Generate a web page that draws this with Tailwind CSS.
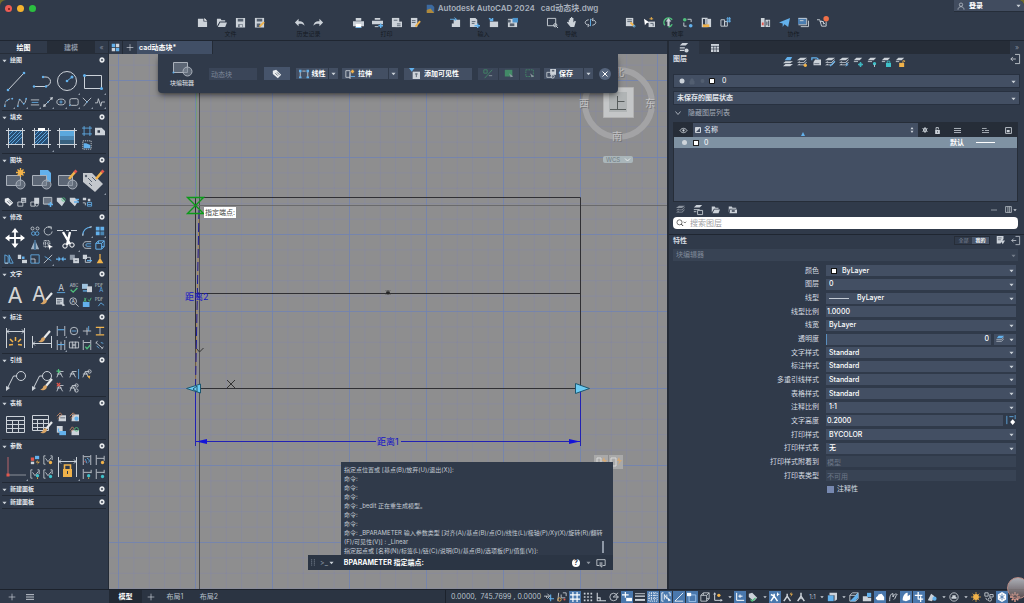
<!DOCTYPE html>
<html lang="zh-CN">
	<head>
		<meta charset="UTF-8" />
		<meta name="viewport" content="width=device-width, initial-scale=1.0" />
		<title>Autodesk AutoCAD 2024 cad动态块.dwg</title>
		<script src="https://cdn.jsdelivr.net/npm/@tailwindcss/browser@4"></script>
	</head>
	<body class="bg-[#6e6a2c]">
		<div class="h-screen flex flex-col overflow-hidden rounded-t-md bg-[#303a4a] text-[#d7dce2] text-[7px] leading-[10px] font-['Inter','Noto_Sans_CJK_SC',sans-serif]">
			<!-- title bar and toolbar -->
			<header class="relative h-[41px] shrink-0 border-b border-[#1f2631]">
				<div class="absolute left-[5px] top-[5px] flex gap-[5px]">
					<button aria-label="关闭" class="size-[7px] rounded-full bg-[#ee5c54] flex items-center justify-center"><span class="size-[2px] rounded-full bg-[#7a1511]"></span></button>
					<button aria-label="最小化" class="size-[7px] rounded-full bg-[#f5b32f]"></button>
					<button aria-label="缩放" class="size-[7px] rounded-full bg-[#2bbf40]"></button>
				</div>
				<button class="absolute right-0 top-0 w-[70px] h-3 bg-[#414c5f] border-b border-[#252d39] flex items-center gap-1 px-[3px] font-bold text-white">
					<span data-icon="user" class="size-2"></span>登录<span data-icon="caret" class="size-[5px] ml-auto"></span>
				</button>
				<div class="h-4 flex items-center justify-center gap-[3px] text-[8px] font-semibold text-[#a9b1bd]">
					<span data-icon="dwg" class="size-[9px]"></span>
					<h1>Autodesk AutoCAD 2024</h1>
					<span class="ml-[3px]">cad动态块.dwg</span>
				</div>
				<nav id="toolbar" class="flex justify-center gap-[21px]"></nav>
			</header>

			<main class="flex-1 min-h-0 flex">
				<!-- tool palette -->
				<aside class="w-[109px] shrink-0 border-r border-[#242b36]">
					<div class="h-[13px] flex bg-[#262d38] text-center leading-[13px] border-b border-[#262d38]">
						<button class="w-[47px] bg-[#303a4a] font-bold text-white">绘图</button>
						<button class="w-12 font-semibold text-[#8b95a3]">建模</button>
						<button aria-label="折叠" class="flex-1 bg-[#303a4a] text-[#7f8998]">«</button>
					</div>
					<div id="palette"></div>
				</aside>

				<section class="flex-1 min-w-0 flex flex-col">
					<div class="h-[13px] shrink-0 flex items-stretch">
						<button aria-label="开始" data-icon="start" class="w-[14px] px-[2px] flex items-center border-r border-[#242b36]"></button>
						<button aria-label="新建" data-icon="plus" class="w-[14px] px-[3px] flex items-center"></button>
						<button class="w-[76px] pl-[2px] text-left bg-[#414f66] border-r border-[#242b36] font-semibold text-white">cad动态块*</button>
					</div>
					<div class="relative flex-1 min-h-0 overflow-hidden bg-[#8e8e8f]">
						<svg class="absolute inset-0 size-full" aria-label="绘图区">
							<defs>
								<pattern id="grid" x="9" y="26" width="77" height="77" patternUnits="userSpaceOnUse">
									<path d="M15.9 0V77M31.3 0V77M46.7 0V77M62.1 0V77M0 15.9H77M0 31.3H77M0 46.7H77M0 62.1H77" stroke="#8085a8" stroke-width=".7" stroke-opacity=".6" />
									<path d="M.5 0V77M0 .5H77" stroke="#7484b0" stroke-opacity=".9" />
								</pattern>
							</defs>
							<rect width="100%" height="100%" fill="url(#grid)" />
							<g transform="translate(-109 -54)" fill="none">
								<path d="M196.5 54V197" stroke="#6fa070" stroke-opacity=".8" />
								<path d="M199.5 54V589" stroke="#505052" />
								<path d="M109 205.500H667" stroke="#6a6a6c" />
								<path d="M195.500 388.500V197.500H580.500V388.500M195.500 293.500H580.500M195.500 388.500H580.500" stroke="#303034" />
								<path d="M386 290.500l4 4M390 290.500l-4 4M388 290v5M386 292.500h4" stroke="#222" stroke-width=".8" />
								<path d="M227 380l8 8M235 380l-8 8M196 348l3.500 4l4-4" stroke="#333" />
								<path d="M199 210L195.500 386" stroke="#a88450" stroke-width=".9" />
								<path d="M199 210L195.500 386" stroke="#1a1a9c" stroke-width="1" stroke-dasharray="9 4" />
								<path d="M195.500 389V446M580.500 389V446M196 441.500H376M401 441.500H580" stroke="#2222b4" />
								<path d="M196 441.500l11-2.500v5zM580 441.500l-11-2.500v5z" fill="#1414d8" />
								<path d="M186.500 388.500l14-4.500v9zM589.500 388.500l-14-5v10z" fill="#6ccbf2" stroke="#1c5670" />
								<path d="M193 389l4-3v6z" stroke="#1c5670" />
								<path d="M187.500 197.500h16l-16 16h16z" stroke="#0a9a18" stroke-width="1.400" />
								<g fill="#1414c8" font-size="9">
									<text x="185" y="300">距离2</text>
									<text x="377" y="445">距离1</text>
								</g>
								<circle cx="618.500" cy="103.500" r="33.500" stroke="#a3a3a5" stroke-width="6" />
								<path d="M603.500 87.500h30v30h-30z" fill="#c4c6c7" stroke="#b2b2b2" />
								<path d="M609 92h18v20h-18z" fill="#b0b4b5" />
								<path d="M617.500 96v13M617.500 101.500h7M610 109.500h16" stroke="#565c5c" />
								<g fill="#737376" font-size="10">
									<text x="615" y="77">北</text>
									<text x="580" y="108">西</text>
									<text x="646" y="108">东</text>
									<text x="613" y="141">南</text>
								</g>
								<g fill="#c2c2c4" font-size="10">
									<text x="614" y="76">北</text>
									<text x="579" y="107">西</text>
									<text x="645" y="107">东</text>
									<text x="612" y="140">南</text>
								</g>
								<rect x="603" y="156" width="30" height="7" rx="2" fill="#aab6ba" />
								<text x="606" y="162" font-size="6" fill="#6f7c82">WCS</text>
								<path d="M625 158.500l2.500 2.500l2.500-2.500" stroke="#e6eaea" />
								<path d="M594 455h14v13h-14zM609 455h14v14h-14z" fill="#a9a9a9" />
								<path d="M597 466v-8h4v8zM611 466v-8h5v8z" stroke="#d8d8d8" />
								<path d="M604 457l-2 4h2l-1 4l4-5h-2zM619 457l-2 4h2l-1 4l4-5h-2z" fill="#d3a978" />
							</g>
						</svg>

						<div class="absolute left-[95px] top-[153px] h-[11px] px-px bg-white text-[#444] leading-[11px]">指定端点: </div>

						<!-- block editor bar -->
						<div class="absolute left-[49px] top-0 w-[460px] h-[39px] rounded-b-sm bg-[#303a4a] shadow-md shadow-black/40 flex items-center">
							<button class="w-12 h-full flex flex-col items-center pt-1 gap-px text-[6px] text-[#e2e6eb]"><span data-icon="block" data-big class="w-[26px] h-5"></span><span class="leading-[8px]">块编辑器</span></button>
							<input aria-label="块名称" value="动态块" disabled class="ml-[3px] w-12 h-3 px-[2px] bg-[#3a4558] text-[#7d8899]" />
							<button aria-label="标记" class="ml-[7px] w-[26px] h-[13px] bg-[#46546b] flex items-center justify-center"><span data-icon="tag" class="size-[10px]"></span></button>
							<div class="ml-[6px] h-[11px] flex gap-px font-bold text-white">
								<button class="w-8 bg-[#434f63] flex items-center justify-center gap-[3px]"><span data-icon="linear" class="size-[10px]"></span>线性</button>
								<button aria-label="更多参数" class="w-[9px] bg-[#434f63] flex items-center justify-center"><span data-icon="caret" class="size-[5px]"></span></button>
							</div>
							<div class="ml-[4px] h-[11px] flex gap-px font-bold text-white">
								<button class="w-[46px] pl-[3px] bg-[#434f63] flex items-center gap-[3px]"><span data-icon="stretch" class="size-[10px]"></span>拉伸</button>
								<button aria-label="更多动作" class="w-[9px] bg-[#434f63] flex items-center justify-center"><span data-icon="caret" class="size-[5px]"></span></button>
							</div>
							<button class="ml-[6px] w-[68px] h-3 pl-[5px] bg-[#434f63] flex items-center gap-[4px] font-bold text-white"><span data-icon="visible" class="size-[11px]"></span>添加可见性</button>
							<div class="ml-[6px] h-3 flex gap-px opacity-60">
								<button aria-label="可见性模式" class="w-5 bg-[#434f63] flex items-center justify-center"><span data-icon="visMode" class="size-[10px]"></span></button>
								<button aria-label="使可见" class="w-5 bg-[#434f63] flex items-center justify-center"><span data-icon="visOn" class="size-[10px]"></span></button>
								<button aria-label="使不可见" class="w-5 bg-[#434f63] flex items-center justify-center"><span data-icon="visOff" class="size-[10px]"></span></button>
							</div>
							<div class="ml-[4px] h-[11px] flex gap-px font-bold text-white">
								<button class="w-[39px] pl-[2px] bg-[#434f63] flex items-center gap-[3px]"><span data-icon="saveBlock" class="size-[10px]"></span>保存</button>
								<button aria-label="更多保存" class="w-[9px] bg-[#434f63] flex items-center justify-center"><span data-icon="caret" class="size-[5px]"></span></button>
							</div>
							<button aria-label="关闭块编辑器" class="ml-[6px] size-3 rounded-full bg-[#56657d] p-[3px]"><span data-icon="close" class="block size-[6px]"></span></button>
						</div>

						<!-- command line -->
						<div class="absolute left-[199px] bottom-[19px] w-[305px]">
							<div class="relative ml-[33px] h-[93px] pt-[3px] pl-[3px] pr-3 overflow-hidden bg-[#303a4a] text-[6px] leading-[9px] text-[#c3cad3]">
								<div id="history"></div>
								<span class="absolute right-[9px] bottom-[2px] w-[2px] h-3 bg-[#8e98a6]"></span>
							</div>
							<div class="h-[15px] flex items-center bg-[#2b3544]">
								<span data-icon="grip" class="w-2 h-[9px] ml-px"></span>
								<button class="ml-[3px] flex items-center text-[#9aa5b3]">&gt;_<span data-icon="caret" class="size-[5px] ml-px"></span></button>
								<label for="cmd" class="ml-[10px] font-bold text-white">BPARAMETER 指定端点:</label>
								<input id="cmd" class="flex-1 min-w-0 bg-transparent outline-none" />
								<button aria-label="帮助" class="size-2 rounded-full bg-white text-[#27303d] font-bold leading-[8px]">?</button>
								<span data-icon="caret" class="size-[5px] ml-[6px] opacity-60"></span>
								<button aria-label="历史" data-icon="cmdHist" class="size-[10px] ml-[5px] mr-[7px]"></button>
							</div>
						</div>
					</div>
				</section>

				<!-- layers and properties -->
				<aside class="w-[357px] shrink-0 flex flex-col border-l-2 border-[#242b36]">
					<div class="h-[13px] shrink-0 flex bg-[#262d38]">
						<button aria-label="图层" class="w-[30px] bg-[#303a4a] flex items-center justify-center"><span data-icon="layerTab" class="size-[10px]"></span></button>
						<button aria-label="表" class="w-[31px] bg-[#2b3340] flex items-center justify-center"><span data-icon="gridTab" class="size-2"></span></button>
						<button aria-label="展开" class="ml-auto w-[14px] bg-[#303a4a] text-[#7f8998]">»</button>
					</div>
					<div class="h-5 shrink-0 flex items-start pl-1 pr-1">
						<h2 class="w-[109px] font-semibold">图层</h2>
						<div id="layerTools" class="flex gap-[2px] pt-[2px]"></div>
						<button aria-label="停靠" data-icon="dock" class="ml-auto size-[10px]"></button>
					</div>
					<div class="px-1 flex flex-col gap-[3px]">
						<div class="h-[14px] flex items-center bg-[#434f63] border border-[#283140] pl-1 pr-[3px]">
							<span data-icon="layerState" class="w-10 h-[10px]" data-wide></span>
							<select aria-label="当前图层" class="flex-1 pl-1 h-3 appearance-none bg-transparent text-white"><option>0</option></select>
							<span data-icon="caret" class="size-[5px]"></span>
						</div>
						<div class="h-[14px] flex items-center bg-[#434f63] border border-[#283140] pl-[3px] pr-[3px]">
							<select aria-label="图层状态" class="flex-1 h-3 appearance-none bg-transparent font-semibold text-[#e2e6eb]"><option>未保存的图层状态</option></select>
							<span data-icon="caret" class="size-[5px]"></span>
						</div>
						<button class="h-[10px] flex items-center gap-[7px] pl-[2px] text-[#a4adb9]"><span data-icon="chevron" class="size-[6px]"></span>隐藏图层列表</button>
					</div>
					<div class="ml-1 mr-[6px] mt-[4px] h-[80px] shrink-0 bg-[#434f63] border border-[#262d38]">
						<table class="w-full table-fixed text-left">
							<thead>
								<tr class="h-[14px] bg-[#262d38]">
									<th class="w-[19px]"><span data-icon="eye" class="block mx-auto size-[7px]"></span></th>
									<th class="bg-[#434f63]"><div class="flex items-center gap-[3px] pl-[2px] pr-[3px]"><span data-icon="nameSq" class="size-[6px]"></span><span class="font-medium">名称</span><span class="w-[84px] flex justify-end"><span data-icon="triUp" class="size-1 mt-2"></span></span><span data-icon="sort" class="size-[6px] ml-auto"></span></div></th>
									<th class="w-[13px]"><span data-icon="freeze" class="block mx-auto size-[6px]"></span></th>
									<th class="w-[13px]"><span data-icon="lock" class="block mx-auto size-[7px]"></span></th>
									<th class="w-[26px]"><span data-icon="bars" class="block mx-auto size-[7px]"></span></th>
									<th class="w-[30px]"><span data-icon="dashes" class="block mx-auto size-[7px]"></span></th>
									<th class="w-[17px]"><span data-icon="vp" class="block mx-auto size-[7px]"></span></th>
								</tr>
							</thead>
							<tbody>
								<tr class="h-[11px] bg-[#7f92a3] text-white">
									<td><span class="block ml-2 size-[5px] rounded-full bg-[#cfd5db]"></span></td>
									<td><div class="flex items-center gap-[5px]"><span class="size-[6px] bg-white border border-[#222]"></span>0</div></td>
									<td></td>
									<td></td>
									<td class="font-semibold text-center">默认</td>
									<td><span class="block w-[19px] h-px mx-auto bg-white"></span></td>
									<td></td>
								</tr>
							</tbody>
						</table>
					</div>
					<div class="h-[15px] shrink-0 flex items-center pl-[7px] pr-[7px] gap-[8px]">
						<button aria-label="全部图层" data-icon="stack" class="size-[9px] opacity-60"></button>
						<button aria-label="新建图层" data-icon="newLayer" class="size-[10px]"></button>
						<button aria-label="新建组" data-icon="open" class="size-[9px]"></button>
						<button aria-label="新建过滤器" data-icon="filter" class="size-[9px]"></button>
						<button aria-label="删除图层" data-icon="minus" class="size-[6px] ml-auto opacity-60"></button>
						<button aria-label="列" class="flex items-center gap-px"><span data-icon="cols" class="size-[7px]"></span><span data-icon="caret" class="size-1"></span></button>
					</div>
					<div class="h-3 shrink-0 ml-1 mr-[6px] rounded-sm bg-white flex items-center pl-[3px] gap-[3px]">
						<span data-icon="search" data-lens class="w-[11px] h-2"></span>
						<input aria-label="搜索图层" placeholder="搜索图层" class="flex-1 h-[10px] text-[8px] text-black placeholder:text-[#a0a0a4] outline-none" />
					</div>
					<div class="mt-[5px] border-t border-[#1f2631] flex items-center pl-1 pr-1">
						<h2 class="font-semibold leading-[11px]">特性</h2>
						<div class="ml-auto flex text-[5px] leading-[7px] border border-[#262d38]">
							<button class="w-[17px] text-[#7f8998]">全部</button>
							<button class="w-[17px] bg-[#4b586d] font-bold text-white">我的</button>
						</div>
						<button aria-label="自定义" data-icon="customize" class="size-[9px] ml-[6px]"></button>
						<button aria-label="停靠" data-icon="dock" class="size-[9px] ml-[6px]"></button>
					</div>
					<div class="mt-[3px] ml-1 mr-[6px] h-3 shrink-0 flex items-center pl-[3px] pr-[2px] bg-[#384354]">
						<select aria-label="对象类型" disabled class="flex-1 h-3 appearance-none bg-transparent text-[#7f8998] opacity-100"><option>块编辑器</option></select>
						<span data-icon="caret" class="size-[5px] opacity-40"></span>
					</div>
					<form id="props" class="mt-[3px] mr-2 h-[232px] shrink-0 grid auto-rows-fr"></form>
				</aside>
			</main>

			<!-- status bar -->
			<footer class="h-[14px] shrink-0 flex items-center bg-[#2b3442] border-t border-[#1c222c] text-[#b9c1cb]">
				<div class="w-[109px] self-stretch flex items-center gap-[10px] pl-2 bg-[#303a4a]">
					<button aria-label="添加" data-icon="plus" class="size-2"></button>
					<button aria-label="列表" data-icon="bars" class="size-2"></button>
				</div>
				<button class="w-[33px] self-stretch bg-[#222934] font-bold text-white">模型</button>
				<button aria-label="新建布局" data-icon="plus" class="size-2 ml-[5px]"></button>
				<button class="w-[34px] ml-[3px]">布局1</button>
				<button class="w-[34px]">布局2</button>
				<div class="ml-auto self-stretch flex items-center border-l border-[#1c222c] pl-[5px] pr-[2px]">
					<output class="w-[92px] whitespace-pre">0.0000,  745.7699 , 0.0000</output>
					<div id="status" class="flex items-center h-full"></div>
				</div>
			</footer>
			<div class="fixed -right-[5px] bottom-1 size-[22px] rounded-full border border-[#b78b84] bg-linear-to-b from-[#b9bcc2]/90 to-[#8a6a63]/50"></div>
		</div>
	</body>
</html>
<script>
	const W = "#ccd2d9"
	const B = "#63b1ec"
	const O = "#f0b24a"
	const G = "#4fbf7b"
	const T = "#3fc1c9"
	const R = "#e2574c"

	// stroked and filled paths
	const s = (d, color = W, width = 1) => `<path d="${d}" fill="none" stroke="${color}" stroke-width="${width}"/>`
	const f = (d, color = W) => `<path d="${d}" fill="${color}"/>`
	const c = (x, y, r, color = W) => `<circle cx="${x}" cy="${y}" r="${r}" fill="none" stroke="${color}"/>`
	const dot = (x, y, color = B, r = 1) => `<circle cx="${x}" cy="${y}" r="${r}" fill="${color}"/>`

	const tagShape = "M1 2l4-1l6 6l-4 4l-6-5z"
	const layerShape = "M4 1h7l-3 3H1z"
	const stackShape = f("M4 1h8l-4 3H0z") + f("M3 5h1l-1 1h5l3-3h1L8.500 7H0zM3 8h1l-1 1h5l3-3h1L8.500 10H0z")
	const brush = s("M24 12l-6 7", "#e6e8ea", 2.2) + f("M19 19c-2-2-4 0-4 1.500c-1 1.500-2 2-3 2c2 1.500 7 1 7-3.500z", "#d9a566")
	const bigBlock = s("M4.500 8.500h14v10h-14z", "#aab1bb") + f("M5 9h13v9H5z", "#5c6675") + `<circle cx="18.500" cy="17.500" r="4.500" fill="#7e8896" fill-opacity=".6" stroke="#aab1bb"/>`
	const figure = s("M1 10l3-7h5M4 3l4 7M1 6h6")

	const icons = {
		caret: f("M1 4h10l-5 6z"),
		chevron: s("M1 3l5 6l5-6", W, 1.5),
		plus: s("M6 1v10M1 6h10"),
		minus: s("M0 6h12", W, 2),
		close: s("M1 1l10 10M11 1L1 11", "#fff", 2),
		gear: s("M6 0v12M0 6h12M2 2l8 8M10 2l-8 8", "#e4e7ea", 2.4) + dot(6, 6, "#e4e7ea", 4.4) + dot(6, 6, "#303a4a", 1.8),
		user: c(6, 4, 2.5) + s("M1.500 11.500c0-6 9-6 9 0"),
		dwg: f("M1 1h7l3 3v7H1z", "#3c6aa0") + f("M1 12V8l5-2l5 6z", "#b08a3c"),
		start: f("M1 1h4.500v4.500H1zM6.500 6.500H11V11H6.500z", B) + f("M6.500 1H11v4.500H6.500zM1 6.500h4.500V11H1z"),
		new: f("M1 2h6v3h4v6H1z") + f("M8 1l3 3H8z", "#fff"),
		open: f("M1 10V2h4l1 1.500h4V5H4z") + f("M4.500 6H12l-2 5H2z"),
		save: f("M1 1h10v10.500H1z") + f("M3 2h6v3H3zM3.500 8h5v3h-5z", "#55606f") + f("M5 8.500h3V11H5z"),
		saveAs: f("M1 1h10v10.500H1z") + f("M3 2h6v3H3zM3 7h4v4H3z", "#55606f") + s("M6 10.500l5-5", O, 2),
		undo: f("M1 6l4-4v2.500c5 0 6 2 6.500 5c-2-2-3.500-2.500-6.500-2v2.500z"),
		redo: f("M11 6L7 2v2.500C2 4.500 1 6.500.5 9.500C2.500 7.500 4 7 7 7.500V10z"),
		print: f("M3 1h6v3H3zM0 4.500h12V10H0z") + f("M3 7.500h6V12H3z", "#fff") + s("M3 11.500h6", B),
		printMore: f("M3 1h6v2H3zM0 4h12v4H0z") + s("M3 10.500h4") + s("M9.500 7v5M7 9.500h5", B, 1.5),
		page: f("M1 1h8v10H1z") + f("M3 3h4v1H3z", "#55606f") + f("M5 5h7v6H5z") + s("M6.500 7.500h4M6.500 9.500h4", "#55606f"),
		pageEdit: f("M1 1h7v10H1z") + s("M2 4h4M2 6h4", "#55606f") + s("M6 10.500l5-6", O, 2),
		import1: f("M4 3h7v8H2V7h2z") + s("M0 2.500h7M5 .5l2 2l-2 2", B),
		import2: f("M1 1h6l2 2v8H1z") + s("M3 5h4M3 7h3", "#55606f") + s("M6 9.500h6M9.500 7v5", B, 1.5),
		import3: f("M2 5h9v6H2z") + s("M1 1.500l4 2M5 1v3H2", B, 1.5),
		import4: f("M1 2h10v9H1z") + f("M3 7h5v3H3z", "#55606f") + f("M6 1h6v5H6z", "#4b93cc") + f("M1 3h3v3H1z", "#55606f"),
		zoomWin: s("M.5 1.500h9v8h-9z") + c(9, 9, 1.8) + s("M10 10l2 2"),
		pan: f("M3 6V3h1.200v2.500V1h1.300v4V0h1.300v5V1h1.300v5l1.500-2l1.200.5L9 11H5L1 6l1-.7z"),
		orbit: s("M4 3C-1 4-1 8 4 9M8 3c5 1 5 5 0 6") + s("M6 2v8", B) + s("M3 7.500l1.500 1.500L3 11M9 1L7.500 3L9 4.500"),
		props: f("M1 1h8v9H1z") + s("M2.500 3h5M2.500 5h5", "#55606f") + s("M6 6l4 4", O, 2) + c(10, 10, 1, B),
		quick: f("M5 5h7v6H5z") + f("M0 2l6 4l-3 .5L1 9z", "#fff") + s("M8 0v3M6 2h4", O) + s("M7 7h3v3", "#55606f"),
		refresh: s("M2 9a5 5 0 0 1 8-6M10 8a5 5 0 0 1-4 3", G, 1.6) + s("M6 4v6", W, 2.4) + f("M3 5l3-4l3 4z"),
		swap: dot(3, 3, G, 2) + dot(9.500, 9.500, B, 2) + s("M6 2.500h4v3M2 6v4h3"),
		clean: s("M1.500 1.500h5v9h-5z", W, 1.4) + f("M7 2h4v9H7z") + f("M2 8h7v3H2z", O) + s("M5 2v6"),
		count: s("M1 3h4v7H1zM5 5h3v5H5z") + s("M7 2h5M7 4.500h5M8.500 0v6M10.500 0v6", B),
		compare: f("M1 1h4v10H1zM6 3h5v8H6z") + f("M2 6h2v3H2z", R) + s("M7.500 5v4M9.500 4v6", "#303a4a"),
		send: f("M0 6l12-5l-2 10l-4-3l-2 3V7z", B),
		share: f("M0 1h9v7H0z", "#4a7cae") + s("M.5 1.500h9v7h-9M2 4h4") + s("M3 10.500h8.500V4"),
		cart: s("M0 3h3l2 7h5V5M3 5h4v3M5 4l4 4") + dot(10, 2, "#f07048", 3),
		block: bigBlock + dot(4.500, 18.500),
		tag: f(tagShape, "#e9ecef") + s("M4 5l3 3M6 4l3 3", "#55606f"),
		linear: s("M1.500 3v7M10.500 3v7") + f("M0 1h3v3H0zM9 1h3v3H9zM0 9h3v2H0zM9 9h3v2H9z", B) + s("M4 2.500h4"),
		stretch: s("M1 2h5v8H1zM6 4v8") + s("M9 1v4M7 3h4", O, 2) + s("M7 9h5", B),
		visible: f("M0 0h6L3 4z", B) + f("M4 4h8v8H4z") + s("M8 6v4M6.500 6.500h3", "#55606f"),
		visMode: s("M1 1h4v4H1zM2 11L11 1", G) + s("M7 8h4"),
		visOn: f("M1 1h9v8H1z", G) + f("M6 5l5 4l-3 1z"),
		visOff: s("M1 1h9v8H1z", G).replace("/>", ' stroke-dasharray="2 1"/>') + f("M6 5l5 4l-3 1z"),
		saveBlock: f("M5 0h7v7H5z") + f("M7 1h3v2H7z", "#55606f") + s("M1 4h6v6H1z") + c(8, 9, 2),
		grip: s("M4 1v10M8 1v10", "#8e98a6").replace("/>", ' stroke-dasharray="2 1"/>'),
		cmdHist: s("M1 2h10v7H8M1 2v7h3") + s("M5 5v5M7 5v6l-2-2"),
		layerTab: f("M4 0h7L8 3H1z") + f("M1 5h6v1.500H1zM1 8h5v1.500H1z") + dot(9, 9, W, 2.5),
		gridTab: f("M0 0h12v12H0z") + s("M0 3.500h12M0 7.500h12M4 3v9M8 3v9", "#303a4a"),
		dock: s("M6 .5h5.500v11H6") + s("M7 6H1M3.500 3.500L1 6l2.500 2.500"),
		stack: stackShape,
		lay1: f("M5 0h6L9 4H2z", B) + f("M3 5h9L8.500 7.500H0zM3 8.500h9L8.500 11H0z"),
		lay2: stackShape + dot(10, 10, O, 2),
		lay3: f("M5 3h7v7H3V6z") + s("M1 4V1h6M7 1l2 2", B, 1.5) + s("M4 8h6", "#55606f"),
		lay4: stackShape + s("M6 11l6-6", B, 1.5),
		lay5: stackShape + s("M8 7l3 2l-3 2", B, 1.2),
		lay6: f(layerShape) + s("M1 5.500h5") + c(9, 9, 2, T) + s("M9 6v6M6 9h6", T),
		lay7: f(layerShape) + s("M1 5.500h5") + dot(9, 8, T, 2) + s("M9 9v3"),
		lay8: f(layerShape) + s("M1 5.500h4") + f("M6 7h6v5H6z", T) + s("M7.500 7V5h3v2", T),
		lay9: f(layerShape) + s("M1 5.500h4") + f("M5 7h6v5H5z", O) + s("M9.500 7V4.500h2V6", O),
		layerState: `<circle cx="4" cy="5" r="2.500" fill="${W}"/><path d="M12 5h4v3h-4zM13 5V3h2v2" fill="#525e70" stroke="#525e70"/><circle cx="24.500" cy="5" r="2" fill="#525e70"/><path d="M31.500 2.500h5v5h-5z" fill="#fff" stroke="#111"/>`,
		eye: s("M0 6c3-5 9-5 12 0c-3 5-9 5-12 0z", W, 1.5) + dot(6, 6, W, 2),
		nameSq: s("M1 1h10v10H1z", W, 2) + f("M1 11L11 1H1z"),
		triUp: f("M6 0l6 12H0z", B),
		sort: f("M6 0l3 4.500H3zM6 12L3 7.500h6z"),
		freeze: dot(6, 6, W, 4) + s("M6 0v12M1 3l10 6M11 3L1 9", W, 1.8) + dot(6, 6, "#262d38", 1.4),
		lock: f("M2 5h8v7H2z") + s("M3.500 5V1h4v3", W, 1.5) + s("M6 7v3", "#262d38"),
		bars: s("M0 2.500h12M0 6h12M0 9.500h12", W, 1.4),
		dashes: s("M0 2.500h8M0 6h3M5 6h7M0 9.500h12", W, 1.3),
		vp: s("M1 1h10v10H1z", W, 1.5) + f("M3 5h5v4H3z"),
		newLayer: f("M4 0h7L8 3H1z") + s("M1 5.500h7M1 8h3") + s("M5.500 6.500h6v5h-6z"),
		filter: f("M1 10V2h4l1 1.500h5V5H2z") + f("M3 6h9v5H2z") + s("M5 8h4", "#303a4a", 2),
		cols: s("M1 1h10v10H1zM5 1v10M8 1v10", W, 1.2),
		search: s("M7.500 7.500l3 3", "#333", 1.4) + c(5, 5, 3.8, "#333") + s("M11 4l2 2l2-2", "#333"),
		customize: f("M1 0h9v4L6 10H1z") + s("M2.500 2.500h5M2.500 5h4", "#55606f") + f("M6 6h6l-3 5z"),
		pick: s("M1 11V1M4 2h5M11 0v5", B) + f("M8 5l3 3.500l-3 3.500l-3-3.500z", "#fff"),
		transBy: f("M4 1h8L9 5H1z", B) + s("M.5 7H8l3.500-3M.5 9.500H8l3.500-3"),

		// palette, large (26 x 28)
		line: s("M6 23L22 6") + dot(6, 23, B, 1.3) + dot(22, 6, B, 1.3),
		poly: s("M6 19.500h13M18 19a4 4 0 0 0 0-9h-3") + dot(6, 19.500, B, 1.2) + dot(18, 19.500, B, 1.2) + dot(15, 10, B, 1.2),
		circle: c(13, 14, 9.5) + s("M13 14l5-4", B) + dot(13, 14, B, 1.3) + dot(18, 10, B, 1.5),
		rect: s("M4.500 8.500h17v13h-17z") + dot(4.500, 8.500, B, 1.5) + dot(21.500, 21.500, B, 1.5),
		hatch: f("M7 7h13v13H7z", "#284e74") + s("M7 11l4-4M7 15l8-8M7 19l12-12M9 20l11-11M13 20l7-7", "#5ba4db") + s("M6.500 4v20M20.500 4v20M4 6.500h19M4 20.500h19"),
		hatch2: f("M7 7h13v13H7z", "#284e74") + s("M7 11l4-4M7 15l8-8M7 19l12-12M9 20l11-11M13 20l7-7", "#5ba4db") + s("M6.500 4v20M20.500 4v20M4 6.500h19M4 20.500h19") + f("M10 4h7v3h-7z", "#fff"),
		gradient: f("M6 7h14v5H6z", "#5ba8dd") + f("M6 12h14v4H6z", "#4b86b2") + f("M6 16h14v4H6z", "#39617f") + s("M5.500 4v20M20.500 4v20M3 6.500h20M3 20.500h20"),
		blockNew: bigBlock + s("M18.500 1v9M14 5.500h9M15.500 2.500l6 6M21.500 2.500l-6 6", O, 1.4) + dot(18.500, 5.500, O, 2.6),
		blockIns: f("M12 3h8l3 3v9H12z", B) + bigBlock,
		blockEdit: bigBlock + s("M15 12l6-7", O, 2.6) + s("M20.500 5.500l2-2", R, 2.8),
		tagEdit: f("M3 6h9l11 11l-8 8L3 15z", "#c4c8cd") + s("M8 11l4 4M12 10l4 4M9 16l3 3", "#55606f") + dot(6, 9, "#55606f", 1.2) + s("M16 12l6-7", O, 2.6) + s("M21.500 5.500l2-2", R, 2.8),
		move: s("M13 7v14M6 14h14", "#fff", 1.8) + f("M13 4l3.500 4.500h-7zM13 24l3.500-4.500h-7zM3 14l4.500-3.500v7zM23 14l-4.500-3.500v7z", "#fff"),
		trim: s("M3 6.500h6M12 6.500h3M17 6.500h6") + s("M9 8l7 12M16 8l-3 13", "#fff", 2.4) + c(11, 22, 2.2, "#fff") + c(18, 21, 2.2, "#fff"),
		text: `<text x="13" y="22" text-anchor="middle" font-size="22" fill="#d4d4d4">A</text>`,
		textStyle: `<text x="11" y="20" text-anchor="middle" font-size="20" fill="#d4d4d4">A</text>` + brush,
		dim: s("M4.500 4v20M22.500 4v20M5 7.500h17M7 5.500l-2 2l2 2M20 5.500l2 2l-2 2") + s("M7 21l4-.5M13.500 13v4M20 21l-4-.5M8 15l3 3M19 15l-3 3", O, 1.5),
		dimStyle: s("M4.500 12v12M23.500 12v12M5 19.500h18M7 17.500l-2 2l2 2") + s("M22 7l-6 7", "#e6e8ea", 2.2) + f("M17 14c-2-2-4 0-4 1.500c-1 1.500-2 2-3 2c2 1.500 7 1 7-3.500z", "#d9a566"),
		leader: c(19, 9, 4.5) + s("M14.500 9h-3L5 22") + f("M4 24l0-5l4 2z"),
		leaderStyle: c(19, 9, 4.5) + s("M14.500 9h-3L5 22") + f("M4 24l0-5l4 2z") + brush,
		table: s("M4.500 6.500h18v16h-18zM4.500 10.500h18M4.500 14.500h18M4.500 18.500h18M10.500 10v13M16.500 10v13"),
		tableStyle: s("M4.500 5.500h16v15h-16zM4.500 9.500h16M4.500 13.500h16M4.500 17.500h16M9.500 9v11M15.500 9v11") + brush,
		corner: s("M6 4v18", "#b8656a") + s("M6 22h18", "#8a8f98") + f("M4.500 20.500h3v3h-3z", R),
		constrain: s("M4.500 4v20M22.500 4v20M5 8.500h17M7 6.500l-2 2l2 2M20 6.500l2 2l-2 2") + f("M9 16h9v8H9z", O) + s("M10.500 16v-4h6v4", O, 1.6) + s("M13.500 18v3", "#303a4a"),

		// palette, small
		arc: s("M1 11c0-6 3-9 9-9").replace("/>", ' stroke-dasharray="3 1.500"/>') + dot(1, 11) + dot(4, 4) + dot(10, 2),
		spline: s("M1 11C2 2 4 2 6 6s4 2 5-4") + dot(1, 11) + dot(3, 3) + dot(8, 8) + dot(11, 2),
		mline: s("M1 3.500h10M1 9.500h10") + s("M2 6.500h8", B),
		ray: s("M2 10l8-8") + f("M0 12l1-4l3 3zM12 0l-1 4l-3-3z") + dot(6, 6),
		ellipse: `<ellipse cx="6" cy="6" rx="5" ry="3.500" fill="none" stroke="${W}"/>` + s("M6 4v4M4 6h4", B),
		rrect: `<rect x="1" y="2" width="10" height="8" rx="2" fill="none" stroke="${W}"/>` + dot(1, 10),
		fork: s("M1 1l5 5l5-5M6 6l-4 5") + dot(6, 6),
		pulse: s("M0 7h3l1-5l3 9l1-5h4"),
		boundary: s("M2.500 0v12M9.500 0v12M0 2.500h12M0 9.500h12", B),
		wipe: f("M0 2h8l4 4v5H0z") + f("M3 5h3v3H3z", "#303a4a"),
		region: s("M1 1h10v10H1z").replace("/>", ' stroke-dasharray="1.500 1"/>') + f("M2 4h3l5 2v4H2z", B),
		copyBlk: s("M1 6h6v5H1z") + f("M5 1h6v6H5z") + s("M6 3.500h4M6 5.500h4", "#55606f"),
		blkPage: f("M5 1h6v7H5z") + s("M1 6h5v5H1z") + c(8, 9, 2),
		blkAdd: f("M1 1h9v8H1z", "#6a7482") + s("M.5 .5h10v8H.5z") + s("M9 6v6M6 9h6", B, 1.8),
		tagSync: f("M1 1h6l4 4l-4 6l-6-6z") + c(9, 3, 2, G),
		tagLink: f("M1 1h6l4 4l-4 6l-6-6z") + s("M6 6h6M8 3h4", B, 2),
		swapTag: f("M1 1h4v3H1zM7 2h3v3H7z") + s("M1 7h3v3") + s("M6.500 6.500h5v4.500h-5zM7 9h4", B),
		copy: c(3, 3, 1.8) + c(9, 3, 1.8) + c(4, 9, 2.2, B) + c(8.500, 9, 2.2, B),
		rotate: s("M9.500 2.500a4.800 4.800 0 1 0 1.500 4M6 1h4v3"),
		mirror: f("M5 2v9H1zM7 2v9h4z", "#9fb2c4") + s("M6 0v12", B),
		array3: s("M1 1h7v7H1zM3 0v10M6 0v10M0 4h9").replace("/>", ' stroke-dasharray="1.500 1"/>') + f("M6 5l6 3.500l-3 .5l-1 3z", "#fff"),
		fillet: s("M1 11C1 5 5 1.500 11 1.500", B, 1.3) + s("M1 12V9M9 1h3"),
		array: f("M1 1h4.500v4.500H1zM6.500 1H11v4.500H6.500zM1 6.500h4.500V11H1z", B) + f("M6.500 6.500H11V11H6.500z", "#4b86b2"),
		offset: s("M11 2H5C0 2 0 10 5 10h6") + s("M11 4.500H6c-2 0-2 3 0 3h5", B),
		box: s("M1 4h7v7H1zM4 4V1h7v7H8M1 4l3-3M8 4l3-3M8 11l3-3", B, 1.2),
		shear: s("M1 1v10h4V3zM6 1l5 10H7z", B) + s("M1 11h4"),
		align: f("M1 1h4v5H1z") + f("M6 3h3v3H6z", B) + f("M6 7h6v4H6z"),
		scale: s("M1 1h10v10H1z", B) + s("M1 6h5v5"),
		lengthen: s("M1 11L11 1") + s("M2 3l8 5", B),
		join: s("M0 6h4M8 6h4", B, 1.5) + f("M3 3l3 3l-3 3zM9 3L6 6l3 3z", B),
		overlap: f("M1 1h6v6H1z", "#8d98a6") + f("M5 5h7v6H5z") + s("M7 8h3", "#55606f"),
		explode: f("M1 1h5v5H1z") + s("M4 4h6v6H4z") + s("M6 8h6", B, 1.5),
		broom: s("M6 0v6", O, 1.5) + f("M5 6h2l3 5H2z", O),
		aUnder: `<text x="6" y="9" text-anchor="middle" font-size="10" fill="${W}">A</text>` + s("M1 11.500h10", B),
		abc: `<text x="6" y="4.500" text-anchor="middle" font-size="5" fill="${W}">ABC</text>` + s("M2 8l3 3l5-5", G, 1.6),
		textAlign: f("M0 1h7v6H0z", "#9fc3df") + f("M6 4h6v7H6z") + s("M1 9.500h5", B, 1.5),
		pdfA: `<text x="0" y="4.500" font-size="5" fill="${W}">PDF</text><text x="5" y="11" font-size="7" fill="${B}">A</text>`,
		textFind: f("M0 1h9v8H0z") + s("M1 3h6M1 5h6M1 7h4", "#55606f") + f("M5 5l6 5l-3 1z"),
		find: c(5, 5, 4) + `<text x="5" y="7.500" text-anchor="middle" font-size="6" fill="${W}">A</text>` + s("M8 8l3.500 3.500"),
		aCheck: f("M1 6h8v6H1z", B) + s("M3 1l2 5M5 1L2 6M7 3l2 2l2-4", G),
		pdfMark: `<text x="0" y="4.500" font-size="5" fill="${W}">PDF</text>` + s("M4 11l3-4l4 3", B),
		dLin: s("M1.500 0v12M10.500 0v12", W) + s("M2 4.500h8", B, 1.3),
		dRad: c(6, 6, 4.5) + s("M3 6h6", B),
		dOrd: s("M1 6h10M6 2v9") + s("M8 0v6", B),
		dVert: s("M1 1.500h10M1 10.500h10", O, 1.5) + s("M6 2v8"),
		dCont: s("M1.500 0v12M10.500 0v12M6 2v10") + s("M2 5.500h8", B, 1.3),
		dTol: s("M.5 2.500h11v7H.5zM4 2v8M8 2v8") + c(6, 6, 1.2),
		dCheck: s("M1.500 0v12M10.500 0v12M2 3h8") + s("M4 8l2 2.500L10 6", G, 1.6),
		dBreak: s("M1 3l8 7M3 1l-2 3M10 8l-2 3") + s("M2 7l3 3M7 3l3 1", B),
		ldAdd: figure + s("M3 0v5M.5 2.500h5", G, 1.4),
		ldDel: figure + s("M1 0l4 4M5 0L1 4", R, 1.4),
		ldAlign: figure + s("M11.500 0v12", B),
		ldCol: figure + c(9, 3, 2) + f("M6 8h4l-1 4z", O),
		ldGrp: figure + c(9, 3, 2) + c(9, 9, 2),
		tLink: f("M4 4h8v7H3z") + s("M1 5l4-4l2 2l-5 5", "#d08a62") + s("M5 7h6", "#55606f"),
		tDown: f("M4 3h8v8H3z") + s("M1 5l4-4l2 2l-5 5", "#d08a62") + dot(9, 8, B, 2.5),
		tUp: f("M1 0h7v8H1z") + f("M4 6h8v5H4z", B) + s("M3 3v4", B, 1.5),
		tSync: f("M3 5h9v6H3z") + s("M1 5l3-4l2 2l-4 4", "#d08a62") + c(9, 4, 2.2, G),
		pAuto: f("M6 1h5v4H6z", B) + f("M1 3h4v4H1z", R) + f("M1 8h4v3H1z") + f("M9 6l-2 3h3l-2 3l4-4H9z", O),
		pShow: s("M3 1H1v10h2M9 1h2v5M3 4l3 4l4-5") + dot(9, 9, O, 2),
		pHide: s("M3 1H1v10h2M9 1h2v5M3 4l3 4l4-5") + dot(9, 8, T, 2) + s("M9 10v2", O),
		pAll: s("M3 1H1v10h2M9 1h2v5M3 4l3 4l4-5") + dot(9, 9, T, 2),
		cConv: s("M1.500 0v12M10.500 0v12M2 2h8") + s("M4 5l2 5M6 4a3 3 0 0 1 2 5", B) + s("M4 9l-1-2", R),
		cShow: s("M1.500 0v12M2 4h9M11 1v6") + dot(9, 9, O, 2),
		cHide: s("M1.500 0v12M2 4h9M11 1v4") + dot(8, 8, T, 2) + s("M8 10v2", O),
		cAll: s("M1.500 0v12M2 4h9M11 1v4") + dot(9, 9, T, 2),

		// status bar
		snapInfer: s("M0 5h6M4 2l3 3l-3 3M3 5v2") + s("M8 3v8M6 8h6", B, 1.3),
		infer: s("M2 1l-1 10M5 3v4h5", W) + s("M7 1h4v4", W) + c(3, 9, 2, O) + dot(9, 9, R, 1.2),
		hash: s("M3.500 0v12M8.500 0v12M0 3.500h12M0 8.500h12", "#fff", 1.4),
		dots: f("M1 1h2v2H1zM5 1h2v2H5zM9 1h2v2H9zM1 5h2v2H1zM5 5h2v2H5zM9 5h2v2H9zM1 9h2v2H1zM5 9h2v2H5zM9 9h2v2H9z"),
		ortho: s("M1.500 1v9.500H12M2 7h3v3", W, 1.3),
		polar: c(5.500, 6, 4.5) + s("M5 6l6-5M5 6h7"),
		dyn: s("M4 0v7M0 3.500h8", "#fff", 1.4) + f("M5 7h7v4H5z", "#fff"),
		lw: s("M0 2h12", W, 1) + s("M0 5h12", W, 1.6) + s("M0 9.500h12", W, 2.4),
		transp: s("M1 1h10v10H1zM1 4h10M1 7.500h10M4 1v10M7.500 1v10", "#fff").replace("/>", ' stroke-dasharray="1.500 1"/>'),
		cycle: s("M3 1H1v10h2M9 1h2v4M4 9V3l3 5V3", "#fff") + f("M7 6l5 4l-3 1z", "#fff"),
		otrack: s("M1 11L11 1M1 11h10", "#fff"),
		osnap: s("M2.500 3.500h8v8h-8z", "#a9cdf0") + f("M0 1h5v4H0z", "#fff"),
		osnap3: s("M1 4h7v7H1zM4 4V1h7v7H8M1 4l3-3M8 4l3-3M8 11l3-3"),
		ucs: s("M2 1v9h9M1 3l1-2l1 2M9 9l2 1l-2 1", W, 1.2) + dot(7, 4, O, 2),
		ucs2: s("M2 1v9h9M6 3v4M4 5h5", "#fff", 1.2),
		tagOk: f(tagShape) + s("M3 9l2 2l4-4", G, 1.5),
		annoOn: s("M5 2v3L1 11M5 5l4 6M5 5L1 3", "#fff", 1.8) + f("M9 0l1 2l2 .5l-2 1l-1 2l-1-2z", "#fff"),
		annoAuto: s("M5 2v3L1 11M5 5l4 6", W, 1.8) + f("M10 0l-2 3h2l-1 3l3-4h-2z", O),
		anno: s("M6 1v4L2 11M6 5l4 6", W, 1.8) + s("M4 8h4"),
		cube: f("M1 4h7v7H1z", B) + f("M3 1h9v3H3zM9 4h3v5l-3 2z"),
		xray: s("M1 4h7v7H1zM1 4l3-3h7v7l-3 3M8 4l3-3") + f("M1 11L11 1v6l-4 4z", B),
		ghost: f("M1 5h6v6H1zM7 7h4v4H7z") + f("M6 1h5v5H6z", B),
		cloud: f("M1 8c0-3 3-2 3-5l4-1l3 4v4H3z", "#fff"),
		wing: s("M2 11c0-6 1-9 4-9v4c2-4 3-4 5-3c-2 1-2 5-4 6", W, 1.2),
		filt: f("M2 10c0-6 3-9 6-9v4l3-2v6l-5 2z", "#fff"),
		gizmo: s("M5 0v9M1 4h9M8 5v7M5 8.500h6", "#fff", 1.5),
		annoMon: f("M1 10L5 2l4 3l-3 6z") + dot(9, 8, B, 2.5),
		iso: c(6, 6, 5) + s("M3 7h6M4 5h4", W, 2),
		sun: dot(6, 6, O, 3.5) + s("M6 0v12M0 6h12M2 2l8 8M10 2l-8 8", O, .9),
		units: s("M1 1h4v4H1zM7 3h4v3H7z") + c(7, 9, 2) + s("M2 7l2 3"),
		hex: f("M6 0l5 3v6l-5 3l-5-3V3z", "#fff") + s("M6 2v8M3 4l6 4M9 4L3 8", "#4a78ad"),
		cog: c(6, 6, 3, "#e9a392") + s("M6 0v3M6 9v3M0 6h3M9 6h3M2 2l2 2M8 8l2 2M10 2L8 4M4 8l-2 2", "#e9a392", 1.6),
	}

	const svg = (name, box = "0 0 12 12") => `<svg viewBox="${box}" class="block size-full overflow-visible" aria-hidden="true">${icons[name]}</svg>`

	document.querySelectorAll("[data-icon]").forEach((el) => {
		let box = "0 0 12 12"
		if ("big" in el.dataset) box = "0 4 26 20"
		if ("wide" in el.dataset) box = "0 0 40 10"
		if ("lens" in el.dataset) box = "0 0 16 12"
		el.innerHTML = svg(el.dataset.icon, box)
	})

	const toolbar = [
		["文件", ["new", "open", "save", "saveAs"]],
		["历史记录", ["undo", "redo"]],
		["打印", ["print", "printMore", "page", "pageEdit"]],
		["输入", ["import1", "import2", "import3", "import4"]],
		["导航", ["zoomWin", "pan", "orbit"]],
		["效率", ["props", "quick", "refresh", "swap", "clean", "count"]],
		["协作", ["compare", "send", "share", "cart"]],
	]
	document.getElementById("toolbar").innerHTML = toolbar
		.map(
			([label, names]) => `
			<div class="text-center text-[6px] text-[#161b23]">
				<div class="flex">${names.map((n) => `<button aria-label="${n}" class="w-[19px] h-[13px] flex items-center justify-center"><span class="size-[11px]">${svg(n)}</span></button>`).join("")}</div>
				<div class="leading-[10px] whitespace-nowrap">${label}</div>
			</div>`
		)
		.join("")

	// "#" marks a large tool, "" is an empty cell, a trailing "+" has a flyout
	const palette = [
		["绘图", ["#line", "#poly", "#circle+", "#rect+", "arc+", "spline+", "mline+", "ray+", "ellipse+", "rrect+", "fork+", "pulse+"]],
		["填充", ["#hatch", "#hatch2+", "#gradient", "boundary", "wipe", "region"]],
		["图块", ["#blockNew", "#blockIns", "#blockEdit", "#tagEdit+", "tag", "copyBlk", "blkPage", "blkAdd", "tagSync", "tagLink", "swapTag"]],
		["修改", ["#move", "copy", "rotate", "#trim+", "fillet+", "array+", "mirror", "array3", "offset", "box", "shear", "align", "scale", "lengthen+", "join", "overlap", "explode", "broom"]],
		["文字", ["#text", "#textStyle", "aUnder", "abc", "textAlign", "pdfA", "textFind", "find", "aCheck", "pdfMark"]],
		["标注", ["#dim", "#dimStyle", "dLin+", "dRad+", "dOrd", "dVert", "dCont+", "dTol", "dCheck", "dBreak"]],
		["引线", ["#leader", "#leaderStyle", "ldAdd", "ldAlign", "ldCol", "", "ldDel", "ldGrp"]],
		["表格", ["#table", "#tableStyle", "tLink", "tDown", "", "", "tUp", "tSync"]],
		["参数", ["#corner+", "pAuto", "pShow", "#constrain+", "cConv", "cShow", "pHide", "pAll", "cHide", "cAll"]],
		["新建面板", []],
		["新建面板", []],
	]
	const tool = (item) => {
		if (!item) return "<span></span>"
		const big = item.startsWith("#")
		const name = item.replace(/[#+]/g, "")
		const flyout = item.endsWith("+") ? `<span class="absolute right-0 bottom-0 border-[1px] border-t-transparent border-l-transparent border-[#8e98a6]"></span>` : ""
		return big
			? `<button aria-label="${name}" class="relative col-span-2 row-span-2">${svg(name, "0 0 26 28")}${flyout}</button>`
			: `<button aria-label="${name}" class="relative flex items-center justify-center"><span class="size-[10px]">${svg(name)}</span>${flyout}</button>`
	}
	document.getElementById("palette").innerHTML = palette
		.map(
			([title, items]) => `
			<section class="border-b border-[#222934] mx-[2px]">
				<div class="h-3 flex items-center gap-[3px] text-[6px] font-semibold text-[#e2e6eb]">
					<span class="size-[5px]">${svg("caret")}</span>${title}
					<button aria-label="设置" class="ml-auto mr-px size-[6px]">${svg("gear")}</button>
				</div>
				<div class="grid grid-cols-8 auto-rows-[14px] ${items.length ? "pt-px pb-px" : ""}">${items.map(tool).join("")}</div>
			</section>`
		)
		.join("")

	document.getElementById("layerTools").innerHTML = ["lay1", "lay2", "lay3", "lay4", "lay5", "lay6", "lay7", "lay8", "lay9"]
		.map((n) => `<button aria-label="${n}" class="w-3 h-3 p-px">${svg(n)}</button>`)
		.join("")

	const history = [
		"指定点位置或 [基点(B)/放弃(U)/退出(X)]:",
		"命令:",
		"命令:",
		"命令:",
		"命令: _bedit 正在重生成模型。",
		"命令:",
		"命令:",
		"命令: _BPARAMETER 输入参数类型 [对齐(A)/基点(B)/点(O)/线性(L)/极轴(P)/Xy(X)/旋转(R)/翻转",
		"(F)/可见性(V)] : _Linear",
		"指定起点或 [名称(N)/标签(L)/链(C)/说明(D)/基点(B)/选项板(P)/值集(V)]:",
	]
	document.getElementById("history").innerHTML = history.map((l) => `<p class="whitespace-nowrap">${l}</p>`).join("")

	const swatch = `<span class="size-[6px] ml-[2px] mr-[5px] bg-white border border-[#111]"></span>`
	const lineSample = `<span class="w-5 h-px mr-[8px] bg-[#c3cad3]"></span>`
	const props = [
		{ label: "颜色", value: "ByLayer", type: "select", lead: swatch },
		{ label: "图层", value: "0", type: "select" },
		{ label: "线型", value: "ByLayer", type: "select", lead: lineSample },
		{ label: "线型比例", value: "1.0000", type: "input" },
		{ label: "线宽", value: "ByLayer", type: "select" },
		{ label: "透明度", value: "0", type: "slider" },
		{ label: "文字样式", value: "Standard", type: "select" },
		{ label: "标注样式", value: "Standard", type: "select" },
		{ label: "多重引线样式", value: "Standard", type: "select" },
		{ label: "表格样式", value: "Standard", type: "select" },
		{ label: "注释比例", value: "1:1", type: "select" },
		{ label: "文字高度", value: "0.2000", type: "pick" },
		{ label: "打印样式", value: "BYCOLOR", type: "select" },
		{ label: "打印样式表", value: "无", type: "select" },
		{ label: "打印样式附着到", value: "模型", type: "disabled" },
		{ label: "打印表类型", value: "不可用", type: "disabled" },
	]
	const field = (p, id) => {
		const caret = `<span class="size-[5px]">${svg("caret")}</span>`
		if (p.type === "select") return `<div class="h-[11px] flex items-center bg-[#434f63] pl-[3px] pr-[2px]">${p.lead || ""}<select id="${id}" class="flex-1 h-[11px] appearance-none bg-transparent font-medium text-white"><option>${p.value}</option></select>${caret}</div>`
		if (p.type === "input") return `<input id="${id}" value="${p.value}" class="w-full h-[11px] px-px bg-[#434f63] font-medium text-white" />`
		if (p.type === "disabled") return `<input id="${id}" value="${p.value}" disabled class="w-full h-[11px] px-px bg-[#384354] text-[#6c7788]" />`
		if (p.type === "slider") return `<div class="h-[11px] flex gap-[3px]"><input id="${id}" value="${p.value}" class="flex-1 min-w-0 px-[2px] text-right bg-[#434f63] border-l border-[#5a8fc0] font-medium text-white" /><button type="button" aria-label="透明度方式" class="w-[22px] flex items-center justify-around bg-[#434f63]"><span class="size-2">${svg("transBy")}</span>${caret}</button></div>`
		return `<div class="h-[11px] flex gap-[3px]"><input id="${id}" value="${p.value}" class="flex-1 min-w-0 px-px bg-[#434f63] font-medium text-white" /><button type="button" aria-label="拾取高度" class="size-[10px]">${svg("pick")}</button></div>`
	}
	document.getElementById("props").innerHTML =
		props
			.map(
				(p, i) => `
			<div class="grid grid-cols-[150px_1fr] gap-[7px] items-center">
				<label for="prop-${i}" class="text-right">${p.label}</label>
				${field(p, `prop-${i}`)}
			</div>`
			)
			.join("") +
		`<div class="flex items-center gap-[3px] pl-[158px]"><input type="checkbox" id="annotative" class="appearance-none size-[7px] bg-[#7788b0]" /><label for="annotative">注释性</label></div>`

	// "*" marks a switched-on toggle, "v" a drop-down arrow
	const status = ["snapInfer", "infer", "*hash", "dots", "ortho", "polar", "*dyn", "lw", "*transp", "*cycle", "*otrack", "*osnap", "osnap3", "ucs", "v", "*ucs2", "tagOk", "v", "*annoOn", "annoAuto", "anno", "1:1", "v", "cube", "v", "xray", "ghost", "*cloud", "wing", "*filt", "*gizmo", "annoMon", "v", "iso", "v", "sun", "units", "*hex", "cog"]
	document.getElementById("status").innerHTML = status
		.map((item) => {
			if (item === "v") return `<button aria-label="更多" class="w-[9px] flex justify-center"><span class="size-1">${svg("caret")}</span></button>`
			if (item === "1:1") return `<button class="w-[9px] text-[6px]">1:1</button>`
			const name = item.replace("*", "")
			const bg = item.startsWith("*") ? "bg-[#4a78ad]" : ""
			return `<button aria-label="${name}" class="w-3 h-3 mr-px p-px ${bg}">${svg(name)}</button>`
		})
		.join("")
</script>
